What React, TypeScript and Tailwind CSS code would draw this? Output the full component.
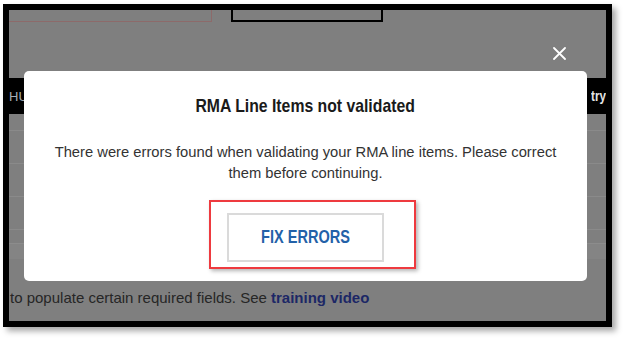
import React from 'react';

// no narrow face installed: Arial-metric bold, squeezed horizontally
const narrow = "font-['Liberation_Sans',Arial,sans-serif] font-bold inline-block scale-x-[0.83]";

const CloseIcon: React.FC = () => (
  <svg width="13" height="13" viewBox="0 0 13 13" className="absolute left-[544px] top-[37px]">
    <path d="M1 1 L12 12 M12 1 L1 12" stroke="#ffffff" strokeWidth="1.8" strokeLinecap="round" />
  </svg>
);

const Background: React.FC = () => {
  return (
    <div className="flex flex-col h-full font-['Liberation_Sans',Arial,sans-serif]">
      <div className="flex items-end h-[12px] shrink-0">
        <div className="w-[203px] h-[12px] border-b border-r border-[#8d6a6a]"></div>
        <div className="ml-[19px] w-[152px] h-[13px] border-2 border-t-0 border-black"></div>
      </div>
      <div className="h-[56px] shrink-0"></div>
      <div className="h-[36px] shrink-0 bg-black flex items-center justify-between">
        <span className="text-[13px] text-[#a7aeb6] leading-none">HU</span>
        <span className={`text-[14px] text-[#e6e6e6] leading-none origin-right ${narrow}`}>try</span>
      </div>
      <div className="h-[17px] shrink-0 border-b border-[#8a8a8a]"></div>
      <div className="h-[33px] shrink-0 border-b border-[#8a8a8a]"></div>
      <div className="h-[33px] shrink-0 border-b border-[#8a8a8a]"></div>
      <div className="h-[33px] shrink-0 border-b border-[#8a8a8a]"></div>
      <div className="h-[13px] shrink-0"></div>
      <div className="h-[16px] shrink-0 bg-[#848484] border-t border-[#8c8c8c]"></div>
      <p className="mt-[30px] text-[15px] leading-[17px] text-[#262626] whitespace-nowrap pl-[1px]">
        to populate certain required fields. See{' '}
        <span className="font-bold text-[#1c2766]">training video</span>
      </p>
    </div>
  );
};

const Modal: React.FC = () => {
  return (
    <div className="absolute left-[15px] top-[61px] w-[563px] h-[210px] bg-white rounded-[5px] flex flex-col items-center font-['Liberation_Sans',Arial,sans-serif]">
      <h2 className={`mt-[23px] text-[19px] leading-[24px] text-[#1a1a1a] whitespace-nowrap ${narrow}`}>
        RMA Line Items not validated
      </h2>
      <p className="mt-[24px] w-[510px] text-center text-[14.75px] leading-[21px] text-[#333333]">
        There were errors found when validating your RMA line items. Please correct them before continuing.
      </p>
      <div className="relative mt-[29px]">
        <button className="w-[157px] h-[49px] border-2 border-[#dadada] bg-white text-[#2361a8]">
          <span className={`text-[17.5px] whitespace-nowrap ${narrow}`}>FIX ERRORS</span>
        </button>
        <div className="absolute left-[-18px] top-[-13px] w-[207px] h-[69px] border-2 border-[#ee3a3f] shadow-[2px_2px_4px_rgba(0,0,0,0.3)]"></div>
      </div>
    </div>
  );
};

const App: React.FC = () => {
  return (
    <div className="w-[625px] h-[340px] bg-white pt-[4px] pl-[3px]">
      <div className="relative w-[609px] h-[323px] border-[6px] border-black bg-[#7f7f7f] overflow-hidden shadow-[4px_4px_6px_rgba(0,0,0,0.35)]">
        <Background />
        <CloseIcon />
        <Modal />
      </div>
    </div>
  );
};

export default App;
